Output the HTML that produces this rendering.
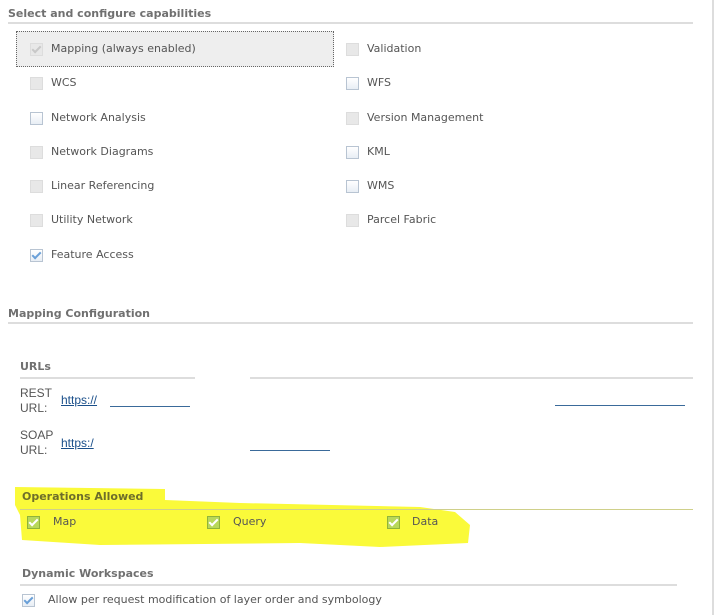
<!DOCTYPE html>
<html><head><meta charset="utf-8"><style>
body{margin:0;width:723px;height:615px;background:#fff;position:relative;overflow:hidden;font-family:"DejaVu Sans","Liberation Sans",sans-serif;font-size:11px;color:#555}
.a{position:absolute;white-space:nowrap}
.h{position:absolute;font-weight:bold;color:#707070;font-size:11px;white-space:nowrap}
.ln{position:absolute;height:2px;background:#ddd}
.cb{position:absolute;width:13px;height:13px;border:1px solid #b8c4d2;background:linear-gradient(#fff,#e8eef5);box-sizing:border-box}
.cb.d{border-color:#ddd;background:#e8e8e8}
.ck::after{content:"";position:absolute;left:3px;top:0px;width:3px;height:7px;border:solid #6aa0d8;border-width:0 2px 2px 0;transform:rotate(45deg)}
.cb.d.ck::after{border-color:#c8c8c8}
.g{border-color:#8fb33a;background:#b8d85a}
.g::after{border-color:#fff}
.u{color:#1a4f8a;text-decoration:underline}
</style></head><body>
<div style="position:absolute;left:712px;top:0;width:2px;height:615px;background:#ddd"></div>
<div class="h" style="left:8px;top:7px">Select and configure capabilities</div>
<div class="ln" style="left:8px;top:22px;width:685px"></div>
<div style="position:absolute;left:16px;top:31px;width:318px;height:36px;background:#eee;border:1px dotted #666;box-sizing:border-box"></div>

<div class="cb d ck" style="left:30px;top:43px"></div><div class="a" style="left:51px;top:42px">Mapping (always enabled)</div>
<div class="cb d" style="left:30px;top:77px"></div><div class="a" style="left:51px;top:76px">WCS</div>
<div class="cb" style="left:30px;top:112px"></div><div class="a" style="left:51px;top:111px">Network Analysis</div>
<div class="cb d" style="left:30px;top:146px"></div><div class="a" style="left:51px;top:145px">Network Diagrams</div>
<div class="cb d" style="left:30px;top:180px"></div><div class="a" style="left:51px;top:179px">Linear Referencing</div>
<div class="cb d" style="left:30px;top:214px"></div><div class="a" style="left:51px;top:213px">Utility Network</div>
<div class="cb ck" style="left:30px;top:249px"></div><div class="a" style="left:51px;top:248px">Feature Access</div>

<div class="cb d" style="left:346px;top:43px"></div><div class="a" style="left:367px;top:42px">Validation</div>
<div class="cb" style="left:346px;top:77px"></div><div class="a" style="left:367px;top:76px">WFS</div>
<div class="cb d" style="left:346px;top:112px"></div><div class="a" style="left:367px;top:111px">Version Management</div>
<div class="cb" style="left:346px;top:146px"></div><div class="a" style="left:367px;top:145px">KML</div>
<div class="cb" style="left:346px;top:180px"></div><div class="a" style="left:367px;top:179px">WMS</div>
<div class="cb d" style="left:346px;top:214px"></div><div class="a" style="left:367px;top:213px">Parcel Fabric</div>

<div class="h" style="left:8px;top:307px">Mapping Configuration</div>
<div class="ln" style="left:8px;top:322px;width:685px"></div>

<div class="h" style="left:20px;top:360px">URLs</div>
<div class="ln" style="left:20px;top:377px;width:175px"></div>
<div class="ln" style="left:250px;top:377px;width:443px"></div>
<div class="a" style="left:20px;top:386px;font-family:'Liberation Sans',sans-serif;font-size:12px">REST</div>
<div class="a" style="left:20px;top:401px;font-family:'Liberation Sans',sans-serif;font-size:12px">URL:</div>
<div class="a u" style="left:61px;top:393px;font-family:'Liberation Sans',sans-serif;font-size:12px">https://</div>
<div style="position:absolute;left:110px;top:406px;width:80px;height:1px;background:#3a6a9a"></div>
<div style="position:absolute;left:555px;top:405px;width:130px;height:1px;background:#3a6a9a"></div>
<div class="a" style="left:20px;top:428px;font-family:'Liberation Sans',sans-serif;font-size:12px">SOAP</div>
<div class="a" style="left:20px;top:443px;font-family:'Liberation Sans',sans-serif;font-size:12px">URL:</div>
<div class="a u" style="left:61px;top:436px;font-family:'Liberation Sans',sans-serif;font-size:12px">https:/</div>
<div style="position:absolute;left:250px;top:450px;width:80px;height:1px;background:#3a6a9a"></div>

<svg style="position:absolute;left:0;top:0" width="723" height="615"><path d="M15 487 L165 489 L165 500 L240 503 L420 507 L455 512 L470 525 L468 543 L380 547 L300 543 L100 545 L22 540 L20 515 L15 505 Z" fill="#fafa3a"/></svg>
<div class="h" style="left:22px;top:490px;color:#6e6e2a">Operations Allowed</div>
<div class="ln" style="left:20px;top:509px;width:673px;background:#cfd08a;height:1px"></div>
<div class="cb g ck" style="left:27px;top:516px"></div><div class="a" style="left:53px;top:515px">Map</div>
<div class="cb g ck" style="left:207px;top:516px"></div><div class="a" style="left:233px;top:515px">Query</div>
<div class="cb g ck" style="left:387px;top:516px"></div><div class="a" style="left:412px;top:515px">Data</div>

<div class="h" style="left:22px;top:567px">Dynamic Workspaces</div>
<div class="ln" style="left:20px;top:584px;width:657px"></div>
<div class="cb ck" style="left:22px;top:594px"></div><div class="a" style="left:48px;top:593px">Allow per request modification of layer order and symbology</div>
</body></html>
